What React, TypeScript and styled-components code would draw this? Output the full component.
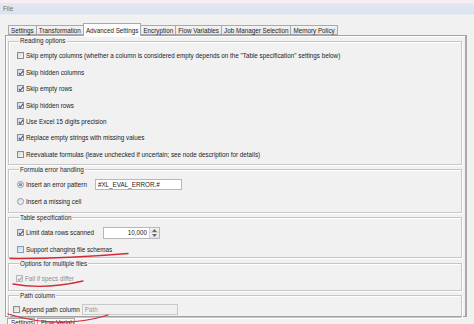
import styled, { createGlobalStyle } from "styled-components";

const GlobalStyle = createGlobalStyle`
  html, body {
    margin: 0;
    padding: 0;
    background: #f0f0f0;
  }
  body {
    font-family: "Liberation Sans", Tahoma, Arial, sans-serif;
    font-size: 6.3px;
    color: #222;
  }
`;

const Window = styled.div`
  position: relative;
  width: 474px;
  height: 324px;
  overflow: hidden;
  background: #f1f1f1;
`;

const TopStrip = styled.div`
  height: 3px;
  background: #f7eef5;
`;

const MenuBar = styled.div`
  height: 11px;
  display: flex;
  align-items: center;
  padding-left: 3px;
  background: linear-gradient(#e3e8f3, #dbe2ee);
  border-bottom: 1px solid #e9ecf2;
`;

const MenuItem = styled.span`
  color: #707070;
`;

const Body = styled.div`
  padding: 7px 7px 0 5px;
`;

const TabStrip = styled.div`
  display: flex;
  align-items: flex-end;
  height: 13px;
  padding-left: 3px;
`;

const Tab = styled.div<{ $active?: boolean }>`
  height: ${(p) => (p.$active ? "13px" : "10px")};
  margin-right: -1px;
  margin-bottom: ${(p) => (p.$active ? "-1px" : "0")};
  padding: 0 2px;
  display: flex;
  align-items: center;
  box-sizing: border-box;
  border: 1px solid #a9a9a9;
  border-bottom: ${(p) => (p.$active ? "none" : "1px solid #a9a9a9")};
  background: ${(p) =>
    p.$active ? "#fcfcfc" : "linear-gradient(#f3f3f3, #e6e6e6)"};
  color: #1e1e1e;
  position: relative;
  z-index: ${(p) => (p.$active ? 1 : 0)};
  white-space: nowrap;
`;

const Panel = styled.div`
  display: flex;
  flex-direction: column;
  gap: 1.4px;
  height: 282px;
  box-sizing: border-box;
  padding: 1px 3px 0 2px;
  border: 1px solid #a3a3a3;
  border-right: 2px double #a8a8a8;
  box-shadow: inset 1px 1px 0 #ffffff;
`;

const Group = styled.fieldset<{ $pb: number }>`
  margin: 0;
  min-width: 0;
  padding: 2.8px 0 ${(p) => p.$pb}px 8px;
  border: 1px solid #c6c6c6;
  box-shadow: inset 1px 1px 0 #ffffff, 1px 1px 0 #ffffff;
`;

const Legend = styled.legend`
  margin-left: 2px;
  padding: 0 1px;
  height: 8px;
  line-height: 8px;
  background: #f1f1f1;
  color: #2a2a2a;
`;

const Row = styled.div<{ $shift?: number; $h?: number }>`
  display: flex;
  align-items: center;
  height: ${(p) => p.$h ?? 16.4}px;
  margin-left: ${(p) => p.$shift ?? 0}px;
  white-space: nowrap;
`;

const Label = styled.span<{ $disabled?: boolean }>`
  color: ${(p) => (p.$disabled ? "#8f8f8f" : "#222")};
`;

const CheckBox = styled.span<{ $disabled?: boolean; $focus?: boolean }>`
  width: 7px;
  height: 7px;
  box-sizing: border-box;
  margin-right: 2px;
  display: grid;
  place-items: center;
  flex: none;
  border: 1px solid
    ${(p) => (p.$focus ? "#7f9dbd" : p.$disabled ? "#b9b9b9" : "#8c8c8c")};
  background: ${(p) =>
    p.$focus
      ? "linear-gradient(135deg, #c9dbee, #e9f1fa)"
      : p.$disabled
      ? "#eeeeee"
      : "linear-gradient(135deg, #d8d8d8, #f8f8f8)"};
`;

const RadioDot = styled.span<{ $on?: boolean }>`
  width: 7px;
  height: 7px;
  box-sizing: border-box;
  margin-right: 2px;
  border-radius: 50%;
  flex: none;
  display: grid;
  place-items: center;
  border: 1px solid #8e9aa8;
  background: linear-gradient(135deg, #d6dde6, #f8f9fb);
  &::after {
    content: "";
    width: 3px;
    height: 3px;
    border-radius: 50%;
    background: ${(p) =>
      p.$on ? "radial-gradient(circle at 35% 35%, #7fb0e6, #1f5aa0)" : "transparent"};
  }
`;

const TextField = styled.div<{ $w: number; $ml: number; $disabled?: boolean }>`
  width: ${(p) => p.$w}px;
  height: 11px;
  margin-left: ${(p) => p.$ml}px;
  box-sizing: border-box;
  display: flex;
  align-items: center;
  padding-left: 2px;
  border: 1px solid ${(p) => (p.$disabled ? "#c9c9c9" : "#b5b8bd")};
  background: ${(p) => (p.$disabled ? "#f0f0f0" : "#ffffff")};
  color: ${(p) => (p.$disabled ? "#9a9a9a" : "#222")};
`;

const Spinner = styled.div`
  width: 57px;
  height: 12px;
  margin-left: 9px;
  box-sizing: border-box;
  display: flex;
  border: 1px solid #b5b8bd;
  background: #ffffff;
`;

const SpinValue = styled.span`
  flex: 1;
  text-align: right;
  padding-right: 2px;
  line-height: 10px;
`;

const SpinButtons = styled.div`
  width: 9px;
  display: flex;
  flex-direction: column;
  border-left: 1px solid #d4d4d4;
`;

const SpinButton = styled.div`
  flex: 1;
  display: grid;
  place-items: center;
  background: linear-gradient(#f4f4f4, #e4e4e4);
  & + & {
    border-top: 1px solid #d4d4d4;
  }
`;

const BottomBar = styled.div`
  display: flex;
  padding: 1px 0 0 2px;
`;

const BottomTab = styled.div<{ $w: number }>`
  width: ${(p) => p.$w}px;
  height: 10px;
  box-sizing: border-box;
  margin-right: 2px;
  padding: 0 0 0 3px;
  line-height: 7px;
  border: 1px solid #a9a9a9;
  background: #fafafa;
  overflow: hidden;
  white-space: nowrap;
`;

const Marks = styled.svg`
  position: absolute;
  top: 0;
  left: 0;
  pointer-events: none;
`;

const Check = ({
  on,
  disabled,
  focus,
}: {
  on?: boolean;
  disabled?: boolean;
  focus?: boolean;
}) => (
  <CheckBox $disabled={disabled} $focus={focus}>
    {on && (
      <svg width="6" height="6" viewBox="0 0 6 6" style={{ overflow: "visible" }}>
        <path
          d="M0.8 3 L2.3 4.6 L5.2 0.9"
          fill="none"
          stroke={disabled ? "#a8a8a8" : "#3a5a8c"}
          strokeWidth="1.1"
        />
      </svg>
    )}
  </CheckBox>
);

const tabs = [
  "Settings",
  "Transformation",
  "Advanced Settings",
  "Encryption",
  "Flow Variables",
  "Job Manager Selection",
  "Memory Policy",
];

const readingOptions: [string, boolean][] = [
  [
    'Skip empty columns (whether a column is considered empty depends on the "Table specification" settings below)',
    false,
  ],
  ["Skip hidden columns", true],
  ["Skip empty rows", true],
  ["Skip hidden rows", true],
  ["Use Excel 15 digits precision", true],
  ["Replace empty strings with missing values", true],
  [
    "Reevaluate formulas (leave unchecked if uncertain; see node description for details)",
    false,
  ],
];

export default function App() {
  return (
    <Window>
      <GlobalStyle />
      <TopStrip />
      <MenuBar>
        <MenuItem>File</MenuItem>
      </MenuBar>
      <Body>
        <TabStrip>
          {tabs.map((t) => (
            <Tab key={t} $active={t === "Advanced Settings"}>
              {t}
            </Tab>
          ))}
        </TabStrip>
        <Panel>
          <Group $pb={1}>
            <Legend>Reading options</Legend>
            {readingOptions.map(([text, on]) => (
              <Row key={text}>
                <Check on={on} />
                <Label>{text}</Label>
              </Row>
            ))}
          </Group>

          <Group $pb={2}>
            <Legend>Formula error handling</Legend>
            <Row>
              <RadioDot $on />
              <Label>Insert an error pattern</Label>
              <TextField $w={87} $ml={8}>
                #XL_EVAL_ERROR.#
              </TextField>
            </Row>
            <Row>
              <RadioDot />
              <Label>Insert a missing cell</Label>
            </Row>
          </Group>

          <Group $pb={0}>
            <Legend>Table specification</Legend>
            <Row>
              <Check on />
              <Label>Limit data rows scanned</Label>
              <Spinner>
                <SpinValue>10,000</SpinValue>
                <SpinButtons>
                  <SpinButton>
                    <svg width="5" height="3" viewBox="0 0 5 3">
                      <path d="M0 3 L2.5 0 L5 3 Z" fill="#6a6a6a" />
                    </svg>
                  </SpinButton>
                  <SpinButton>
                    <svg width="5" height="3" viewBox="0 0 5 3">
                      <path d="M0 0 L2.5 3 L5 0 Z" fill="#6a6a6a" />
                    </svg>
                  </SpinButton>
                </SpinButtons>
              </Spinner>
            </Row>
            <Row>
              <Check focus />
              <Label>Support changing file schemas</Label>
            </Row>
          </Group>

          <Group $pb={2.5}>
            <Legend>Options for multiple files</Legend>
            <Row $shift={-1}>
              <Check on disabled />
              <Label $disabled>Fail if specs differ</Label>
            </Row>
          </Group>

          <Group $pb={0.5}>
            <Legend>Path column</Legend>
            <Row $shift={-4} $h={14}>
              <Check />
              <Label>Append path column</Label>
              <TextField $w={96} $ml={2} $disabled>
                Path
              </TextField>
            </Row>
          </Group>
        </Panel>
        <BottomBar>
          <BottomTab $w={28}>Settings</BottomTab>
          <BottomTab $w={38}>Flow Variables</BottomTab>
        </BottomBar>
      </Body>
      <Marks width="474" height="324" viewBox="0 0 474 324">
        <g fill="none" stroke="#d42a35" strokeWidth="1.3" strokeLinecap="round">
          <path d="M10 258.5 Q 62 259 128 253.5" />
          <path d="M13 284 Q 44 290 83 281" />
          <path d="M8 314 Q 60 330 108 315" />
        </g>
      </Marks>
    </Window>
  );
}
